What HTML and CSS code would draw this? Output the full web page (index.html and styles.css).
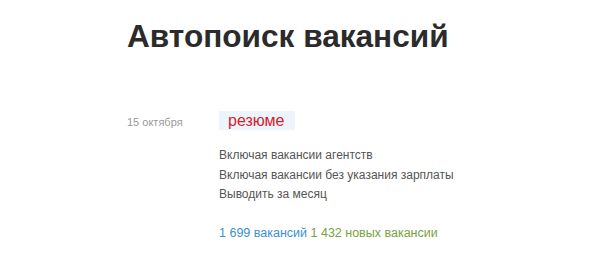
FILE: index.html
```html
<!DOCTYPE html>
<html lang="ru">
<head>
<meta charset="utf-8">
<title>Автопоиск вакансий</title>
<link rel="stylesheet" href="styles.css">
</head>
<body>
<div class="page">
  <h1 class="title">Автопоиск вакансий</h1>
  <div class="item">
    <div class="date">15 октября</div>
    <div class="content">
      <div class="badge">резюме</div>
      <ul class="options">
        <li>Включая вакансии агентств</li>
        <li>Включая вакансии без указания зарплаты</li>
        <li>Выводить за месяц</li>
      </ul>
      <div class="stats"><span class="total">1 699 вакансий</span> <span class="new">1 432 новых вакансии</span></div>
    </div>
  </div>
</div>
</body>
</html>
```
FILE: styles.css
```css
html, body {
  margin: 0;
  padding: 0;
  background: #fff;
}
body {
  font-family: Arial, "Liberation Sans", sans-serif;
  color: #333;
}
.page {
  padding: 16px 0 0 127px;
}
.title {
  margin: 0;
  font-size: 31.6px;
  line-height: 40px;
  font-weight: bold;
  color: #2b2b2b;
}
.item {
  display: flex;
  margin-top: 55px;
}
.date {
  width: 92px;
  font-size: 11px;
  color: #999;
  padding-top: 5px;
}
.content {
  display: flex;
  flex-direction: column;
  align-items: flex-start;
}
.badge {
  background: #eef4fb;
  color: #d3212d;
  font-size: 16px;
  line-height: 19px;
  padding: 0 10px 0 9px;
}
.options {
  list-style: none;
  margin: 16px 0 0;
  padding: 0;
  font-size: 12px;
  line-height: 19.5px;
  color: #555;
}
.stats {
  margin-top: 20px;
  font-size: 12.5px;
  line-height: 16px;
}
.total {
  color: #3b8fd4;
}
.new {
  color: #76a33a;
}
```
